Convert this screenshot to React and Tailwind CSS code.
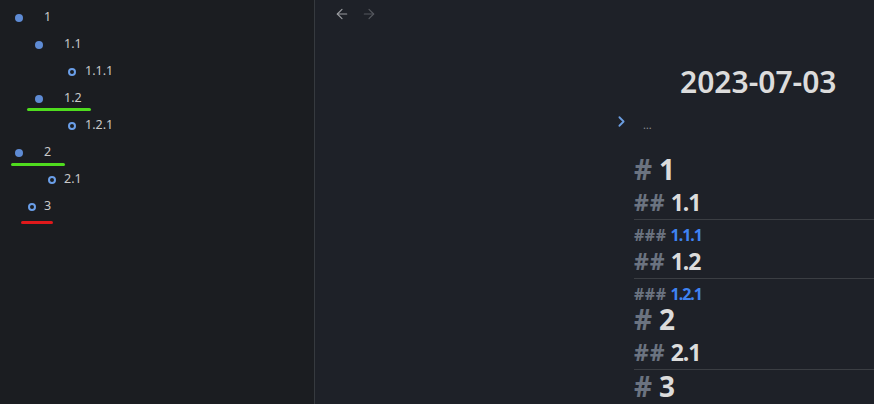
import React from "react";
import { ArrowLeft, ArrowRight, ChevronRight } from "lucide-react";

const outline = [
  { label: "1", hollow: false, pad: "pl-[15px]", gap: "ml-[21px]" },
  { label: "1.1", hollow: false, pad: "pl-[35px]", gap: "ml-[21px]" },
  { label: "1.1.1", hollow: true, pad: "pl-[68px]", gap: "ml-[9px]" },
  {
    label: "1.2",
    hollow: false,
    pad: "pl-[35px]",
    gap: "ml-[21px]",
    mark: "left-[27px] w-[64px] top-[23px] bg-[#4fdc1e]",
  },
  { label: "1.2.1", hollow: true, pad: "pl-[68px]", gap: "ml-[9px]" },
  {
    label: "2",
    hollow: false,
    pad: "pl-[15px]",
    gap: "ml-[21px]",
    mark: "left-[11px] w-[54px] top-[24px] bg-[#4fdc1e]",
  },
  { label: "2.1", hollow: true, pad: "pl-[48px]", gap: "ml-[8px]" },
  {
    label: "3",
    hollow: true,
    pad: "pl-[28px]",
    gap: "ml-[8px]",
    mark: "left-[21px] w-[32px] top-[28px] bg-[#e0191b]",
  },
];

function Bullet({ hollow }) {
  if (hollow) {
    return (
      <span className="block w-2 h-2 rounded-full border-2 border-[#6a9ee8] shrink-0" />
    );
  }
  return <span className="block w-2 h-2 rounded-full bg-[#5e8bd4] shrink-0" />;
}

function Sidebar() {
  return (
    <aside className="w-[315px] h-full bg-[#1b1d21] border-r border-[#363a3f] pt-[4px]">
      {outline.map((item) => (
        <div
          key={item.label}
          className={`relative flex items-center h-[27px] ${item.pad}`}
        >
          <Bullet hollow={item.hollow} />
          <span className={`${item.gap} text-[12.5px] text-[#c9c9c9]`}>
            {item.label}
          </span>
          {item.mark && (
            <span className={`absolute h-[3px] rounded-full ${item.mark}`} />
          )}
        </div>
      ))}
    </aside>
  );
}

function Heading({ level, text }) {
  const hashes = "#".repeat(level);
  if (level === 1) {
    return (
      <div className="h-8 flex items-center text-[28px] font-bold leading-8">
        <span className="text-[#6b7380]">{hashes}</span>
        <span className="ml-[7px] text-[#dcdcdc]">{text}</span>
      </div>
    );
  }
  if (level === 2) {
    return (
      <div className="h-[35px] flex items-center border-b border-[#3b3e43] text-[23px] font-bold leading-[26px]">
        <span className="text-[#6b7380] tracking-[1px]">{hashes}</span>
        <span className="ml-[5px] text-[#dcdcdc] tracking-[-1px]">{text}</span>
      </div>
    );
  }
  return (
    <div className="h-6 flex items-center pt-[5px] text-[16px] font-bold leading-[18px]">
      <span className="text-[#6b7380] tracking-[0.5px]">{hashes}</span>
      <span className="ml-[4px] text-[#3f83f2] tracking-[-1px]">{text}</span>
    </div>
  );
}

const headings = [
  [1, "1"],
  [2, "1.1"],
  [3, "1.1.1"],
  [2, "1.2"],
  [3, "1.2.1"],
  [1, "2"],
  [2, "2.1"],
  [1, "3"],
];

function Main() {
  return (
    <main className="flex-1 h-full bg-[#1e2128] flex flex-col overflow-hidden">
      <div className="h-7 flex items-center pl-[19px] gap-[11px] shrink-0">
        <ArrowLeft size={16} strokeWidth={1.75} className="text-[#9a9ca0]" />
        <ArrowRight size={16} strokeWidth={1.75} className="text-[#55585e]" />
      </div>
      <div className="mt-9 pl-[365px] text-[30px] leading-9 font-semibold text-[#dcdcdc] whitespace-nowrap">
        2023-07-03
      </div>
      <div className="mt-3 h-[18px] flex items-center pl-[298px]">
        <ChevronRight size={17} strokeWidth={2.5} className="text-[#6b9de0]" />
        <span className="ml-[13px] text-[11px] text-[#8a8d92] leading-none pt-[6px]">
          …
        </span>
      </div>
      <div className="mt-[23px] pl-[319px] whitespace-nowrap">
        {headings.map(([level, text], i) => (
          <Heading key={i} level={level} text={text} />
        ))}
      </div>
    </main>
  );
}

export default function App() {
  return (
    <div
      className="w-[874px] h-[404px] flex overflow-hidden"
      style={{ fontFamily: '"Noto Sans", "Open Sans", sans-serif' }}
    >
      <Sidebar />
      <Main />
    </div>
  );
}
